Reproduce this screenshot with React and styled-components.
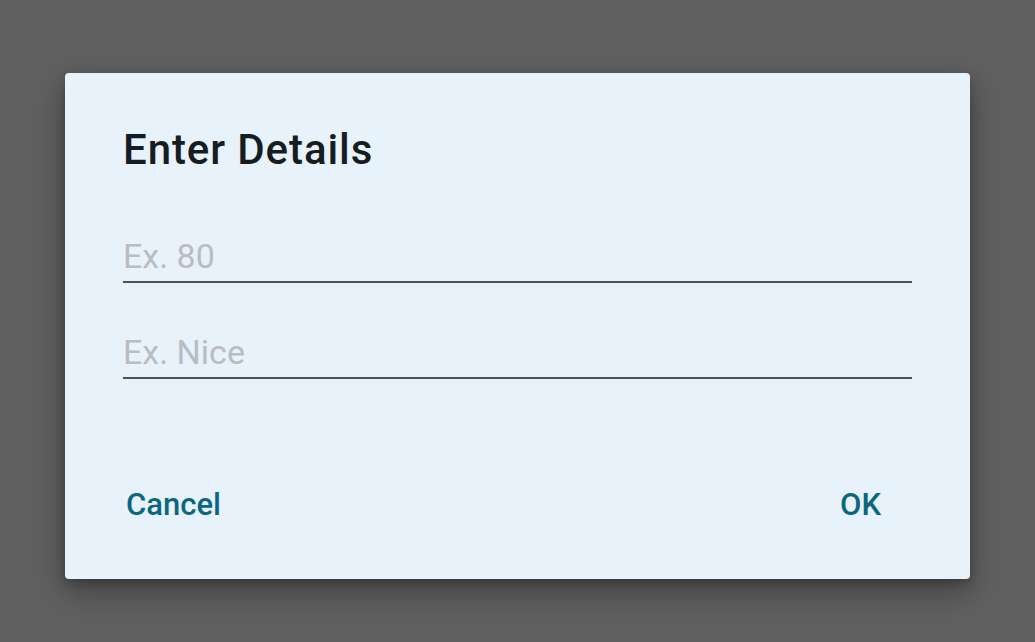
import React from "react";
import styled, { createGlobalStyle } from "styled-components";

const GlobalStyle = createGlobalStyle`
  html, body {
    margin: 0;
    padding: 0;
    height: 100%;
    background: #606060;
  }
  #root {
    height: 100%;
  }
`;

const Backdrop = styled.div`
  height: 100%;
  display: flex;
  justify-content: center;
  align-items: flex-start;
  padding-top: 73px;
  box-sizing: border-box;
  font-family: Roboto, "Noto Sans", sans-serif;
`;

const Dialog = styled.div`
  width: 905px;
  height: 506px;
  box-sizing: border-box;
  background: #e8f2fb;
  border-radius: 4px;
  box-shadow: 0 12px 32px rgba(0, 0, 0, 0.35), 0 4px 10px rgba(0, 0, 0, 0.2);
  display: flex;
  flex-direction: column;
  padding: 53px 58px 48px 58px;
`;

const Title = styled.h2`
  margin: 0;
  font-size: 42px;
  line-height: 48px;
  font-weight: 500;
  letter-spacing: 0.9px;
  color: #161d22;
`;

const Fields = styled.div`
  display: flex;
  flex-direction: column;
  gap: 49px;
  margin-top: 62px;
`;

const Field = styled.input`
  display: block;
  width: 100%;
  box-sizing: border-box;
  border: none;
  border-bottom: 2px solid #4a5256;
  background: transparent;
  outline: none;
  padding: 0 0 6px;
  font-family: Roboto, "Noto Sans", sans-serif;
  font-size: 34px;
  line-height: 39px;
  height: 47px;
  color: #161d22;

  &::placeholder {
    color: #b9bdc1;
    opacity: 1;
  }
`;

const Actions = styled.div`
  margin-top: auto;
  display: flex;
  justify-content: space-between;
  margin-left: -7px;
  margin-right: 21px;
`;

const ActionButton = styled.button`
  border: none;
  background: transparent;
  padding: 8px 10px;
  font-family: Roboto, "Noto Sans", sans-serif;
  font-size: 31px;
  line-height: 36px;
  font-weight: 500;
  color: #0d6680;
  cursor: pointer;
`;

export default function App() {
  return (
    <>
      <GlobalStyle />
      <Backdrop>
        <Dialog>
          <Title>Enter Details</Title>
          <Fields>
            <Field placeholder="Ex. 80" />
            <Field placeholder="Ex. Nice" />
          </Fields>
          <Actions>
            <ActionButton>Cancel</ActionButton>
            <ActionButton>OK</ActionButton>
          </Actions>
        </Dialog>
      </Backdrop>
    </>
  );
}
